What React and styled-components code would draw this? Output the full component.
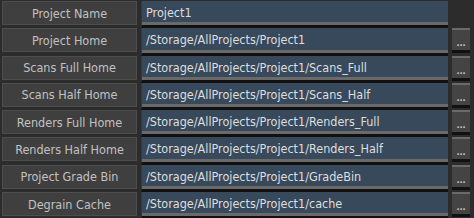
import React from 'react'
import styled, { createGlobalStyle } from 'styled-components'

const GlobalStyle = createGlobalStyle`
    html, body {
        margin: 0;
        padding: 0;
        background: #2c2c2c;
    }
    body {
        font-family: "DejaVu Sans Condensed", "Liberation Sans", sans-serif;
    }
`

const rows = [
    { label: 'Project Name', value: 'Project1', browse: false },
    { label: 'Project Home', value: '/Storage/AllProjects/Project1', browse: true },
    { label: 'Scans Full Home', value: '/Storage/AllProjects/Project1/Scans_Full', browse: true },
    { label: 'Scans Half Home', value: '/Storage/AllProjects/Project1/Scans_Half', browse: true },
    { label: 'Renders Full Home', value: '/Storage/AllProjects/Project1/Renders_Full', browse: true },
    { label: 'Renders Half Home', value: '/Storage/AllProjects/Project1/Renders_Half', browse: true },
    { label: 'Project Grade Bin', value: '/Storage/AllProjects/Project1/GradeBin', browse: true },
    { label: 'Degrain Cache', value: '/Storage/AllProjects/Project1/cache', browse: true },
]

const App = () => {
    return (
        <>
            <GlobalStyle />
            <Panel>
                {rows.map((r) => (
                    <Row key={r.label}>
                        <Label>{r.label}</Label>
                        <Field>
                            <FieldText>{r.value}</FieldText>
                        </Field>
                        <BrowseSlot>
                            {r.browse && <Browse>...</Browse>}
                        </BrowseSlot>
                    </Row>
                ))}
            </Panel>
        </>
    )
}

const Panel = styled.div`
    display: grid;
    grid-auto-flow: row;
    padding: 1px 2px 0 2px;
    width: 474px;
    box-sizing: border-box;
`

const Row = styled.div`
    display: flex;
    align-items: stretch;
    height: 27.3px;
    box-sizing: border-box;
`

const Label = styled.div`
    width: 135px;
    height: 24px;
    box-sizing: border-box;
    background: #3f3f3f;
    border: 1px solid #4d4d4d;
    color: #c2c2c2;
    font-size: 12.5px;
    display: flex;
    align-items: center;
    justify-content: center;
    margin-right: 4px;
`

const Field = styled.div`
    flex: 1;
    height: 27.3px;
    box-sizing: border-box;
    background: #38495c;
    border-left: 1px solid #2f3b49;
    border-bottom: 3px solid #111;
    box-shadow: inset 0 -3px 0 #6a6a6a;
    display: flex;
    align-items: flex-start;
    padding: 4px 0 0 4px;
`

const FieldText = styled.span`
    color: #dedede;
    font-size: 12.5px;
    white-space: nowrap;
`

const BrowseSlot = styled.div`
    width: 24px;
    padding: 0 2px 0 4px;
    box-sizing: border-box;
    display: flex;
`

const Browse = styled.div`
    width: 19px;
    height: 25px;
    box-sizing: border-box;
    background: #444;
    border-top: 2px solid #6a6a6a;
    border-bottom: 3px solid #111;
    color: #c8c8c8;
    font-size: 9px;
    font-weight: bold;
    display: flex;
    align-items: flex-end;
    justify-content: center;
    padding-bottom: 2px;
    line-height: 9px;
`

export default App
